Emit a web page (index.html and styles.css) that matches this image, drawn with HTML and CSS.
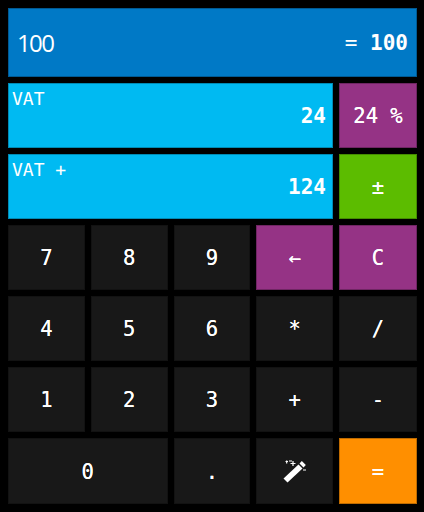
FILE: index.html
```html
<!DOCTYPE html>
<html lang="en">
<head>
    <meta charset="UTF-8">
    <meta name="viewport" content="width=device-width, initial-scale=1.0">
    <title>VAT Calculator</title>
    <link rel="stylesheet" href="styles.css">
</head>
<body>
    <div class="calc">
        <div class="tile display">
            <span class="display-input">100</span>
            <span class="display-result"><span class="equals">=</span> 100</span>
        </div>

        <div class="tile field">
            <span class="field-label">VAT</span>
            <span class="field-value">24</span>
        </div>
        <button class="tile key purple">24 %</button>

        <div class="tile field">
            <span class="field-label">VAT +</span>
            <span class="field-value">124</span>
        </div>
        <button class="tile key green">±</button>

        <button class="tile key">7</button>
        <button class="tile key">8</button>
        <button class="tile key">9</button>
        <button class="tile key purple">←</button>
        <button class="tile key purple">C</button>

        <button class="tile key">4</button>
        <button class="tile key">5</button>
        <button class="tile key">6</button>
        <button class="tile key">*</button>
        <button class="tile key">/</button>

        <button class="tile key">1</button>
        <button class="tile key">2</button>
        <button class="tile key">3</button>
        <button class="tile key">+</button>
        <button class="tile key">-</button>

        <button class="tile key wide">0</button>
        <button class="tile key">.</button>
        <button class="tile key" aria-label="Magic">
            <svg class="wand" width="24" height="24" viewBox="0 0 24 24">
                <path d="M0.5 18.5 L15.5 4.5 L19.5 8.5 L4.5 22.5 Z" fill="#fff"/>
                <path d="M16.5 3.5 L18.8 1 L22.8 5 L20.5 7.5 Z" fill="#fff"/>
                <path d="M2.5 1.5h2.5M3.7 0.5v3M7.5 3.5h5M10 1v5M6 1h3M20 10h3" stroke="#fff" stroke-width="1.2" fill="none"/>
            </svg>
        </button>
        <button class="tile key orange">=</button>
    </div>
</body>
</html>
```

FILE: styles.css
```css
html, body {
    height: 100%;
}

body {
    margin: 0;
    padding: 8px 7px 8px 8px;
    box-sizing: border-box;
    background: #000;
    color: #fff;
    font-family: "DejaVu Sans Mono", monospace;
}

.calc {
    display: grid;
    grid-template-columns: repeat(4, 1fr) 78px;
    grid-template-rows: 69px repeat(5, 65px) 66px;
    gap: 6px;
}

.tile {
    margin: 0;
    padding: 0;
    box-sizing: border-box;
    border: 1px solid rgba(0, 0, 0, 0.25);
    color: #fff;
    font-family: inherit;
}

.display {
    grid-column: span 5;
    display: flex;
    justify-content: space-between;
    align-items: center;
    padding: 0 8px 0 8px;
    background: #0079c6;
}

.display-input {
    font-family: "Open Sans", sans-serif;
    font-size: 24px;
    letter-spacing: -1.6px;
}

.display-result {
    font-size: 21px;
    font-weight: bold;
}

.equals {
    font-weight: normal;
}

.field {
    grid-column: span 4;
    display: flex;
    flex-direction: column;
    padding: 4px 6px 0 3px;
    background: #00baf2;
}

.field-label {
    font-size: 18px;
    line-height: 22px;
}

.field-value {
    align-self: flex-end;
    font-size: 21px;
    font-weight: bold;
    line-height: 24px;
    margin-top: -6px;
}

.key {
    display: flex;
    justify-content: center;
    align-items: center;
    padding-top: 1px;
    background: #181818;
    font-size: 20.5px;
    text-shadow: 0 0 0.6px #fff;
}

.wide {
    grid-column: span 2;
}

.purple {
    background: #953385;
}

.green {
    background: #5cbc00;
}

.orange {
    background: #ff8f00;
}

.wand {
    display: block;
}
```
